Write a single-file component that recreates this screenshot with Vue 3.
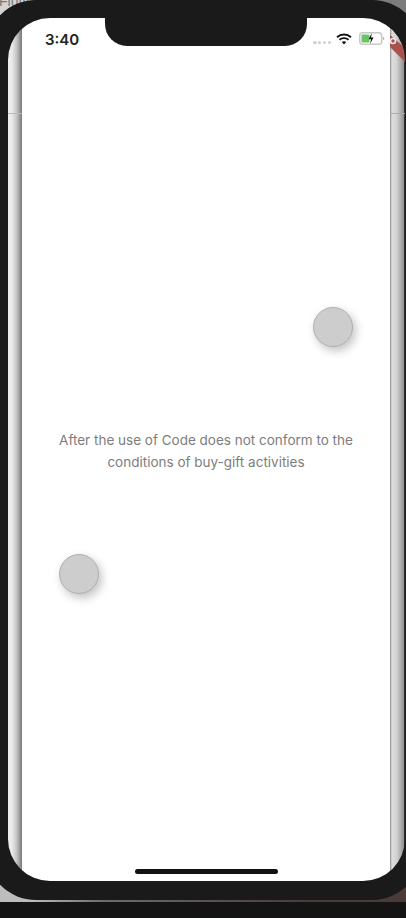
<script setup>
const message = [
  'After the use of Code does not conform to the',
  'conditions of buy-gift activities',
]
const dots = [0, 1, 2, 3]
</script>

<template>
  <div class="page">
    <div class="stage">
      <span class="behind-title">Flutter</span>
      <div class="bezel">
        <div class="display">
          <div class="strip strip-left">
            <div class="strip-top"></div>
          </div>
          <div class="screen">
            <div class="notch"></div>
            <header class="status">
              <span class="time">3:40</span>
              <div class="indicators">
                <div class="signal">
                  <i v-for="d in dots" :key="d"></i>
                </div>
                <svg class="wifi" viewBox="0 0 16 12" width="16" height="12">
                  <path d="M1 4.2C5 .6 11 .6 15 4.2" fill="none" stroke="#111" stroke-width="1.9" />
                  <path d="M3.5 6.8C6 4.6 10 4.6 12.5 6.8" fill="none" stroke="#111" stroke-width="1.9" />
                  <path d="M5.8 9.1C7 8 9 8 10.2 9.1L8 11.5Z" fill="#111" />
                </svg>
                <svg class="battery" viewBox="0 0 26 13" width="26" height="13">
                  <rect x=".75" y=".75" width="22" height="11.5" rx="3" fill="#fff" stroke="#c8c8c8" stroke-width="1.5" />
                  <rect x="2.5" y="2.5" width="8" height="8" rx="1" fill="#67c665" />
                  <path d="M12.8 1 9.6 7.2h2.5L11 12l3.6-6.4h-2.5Z" fill="#111" />
                  <rect x="24" y="5" width="1.2" height="3" fill="#bbb" />
                </svg>
              </div>
            </header>
            <main class="content">
              <p v-for="line in message" :key="line" class="line">{{ line }}</p>
            </main>
            <div class="home"></div>
            <button class="fab fab-right" aria-label="Float right"></button>
            <button class="fab fab-left" aria-label="Float left"></button>
          </div>
          <div class="strip strip-right">
            <svg class="ribbon" viewBox="0 0 15 95" width="15" height="95">
              <path d="M0 17 15 30V44L0 29Z" fill="#a8524e" />
              <circle cx="3" cy="23" r="2.5" fill="none" stroke="#f2e6e5" stroke-width="1.6" />
            </svg>
          </div>
        </div>
      </div>
    </div>
  </div>
</template>

<style>
html, body { margin: 0; background: #141414; }
</style>

<style scoped>
.page {
  width: 406px;
  height: 918px;
  overflow: hidden;
  background: #141414;
}
.stage {
  position: relative;
  height: 902px;
  overflow: hidden;
  background:
    linear-gradient(90deg, #d4d4d4 0, #d4d4d4 50%, #7c7c7c 50%, #7c7c7c 100%) top / 100% 50% no-repeat,
    linear-gradient(90deg, #bdbdbd 0, #bdbdbd 8%, #6d6d6d 25%, #4a3b39 75%, #4a3b39 100%) bottom / 100% 50% no-repeat;
}
.behind-title {
  position: absolute;
  left: -1px;
  top: -7px;
  font: 14px "Liberation Sans", sans-serif;
  color: #777;
}
.bezel {
  position: relative;
  box-sizing: border-box;
  width: 436px;
  height: 900px;
  margin-left: -14px;
  padding: 18px 17px 19px 22px;
  border-radius: 50px;
  background: #1a1a1a;
}
.display {
  display: flex;
  height: 863px;
  overflow: hidden;
  border-radius: 42px;
}
.strip {
  flex: none;
  display: flex;
  flex-direction: column;
}
.strip-left {
  width: 14px;
  background: linear-gradient(90deg, #f0f0f0 0, #e8e8e8 30%, #c0c0c0 65%, #777 100%);
}
.strip-top {
  height: 95px;
  border-bottom: 1px solid #bbb;
}
.strip-right {
  width: 15px;
  box-sizing: border-box;
  border-right: 1px solid #333;
  background: linear-gradient(90deg, #8a8a8a 0, #dedede 14%, #d4d4d4 45%, #aaaaaa 80%, #8e8e8e 100%);
}
.ribbon {
  display: block;
  border-bottom: 1px solid #aaa;
}
.screen {
  position: relative;
  flex: none;
  width: 368px;
  display: flex;
  flex-direction: column;
  background: #fff;
}
.notch {
  position: absolute;
  left: 83px;
  top: 0;
  width: 202px;
  height: 28px;
  border-radius: 0 0 22px 22px;
  background: #1a1a1a;
}
.status {
  flex: none;
  height: 42px;
  display: flex;
  align-items: center;
  justify-content: space-between;
  padding: 0 5px 0 23px;
}
.time {
  font: 600 15px Inter, "Liberation Sans", sans-serif;
  color: #222;
}
.indicators {
  display: flex;
  align-items: center;
  gap: 5px;
  margin-top: -1px;
}
.signal {
  display: flex;
  gap: 1.6px;
  margin-top: 8px;
}
.signal i {
  width: 3.2px;
  height: 3.2px;
  border-radius: 50%;
  background: #d2d2d2;
}
.wifi,
.battery {
  display: block;
}
.battery {
  margin-left: 2px;
}
.content {
  flex: 1;
  display: flex;
  flex-direction: column;
  align-items: center;
  justify-content: center;
  padding-bottom: 28px;
}
.line {
  margin: 0;
  font: 13.5px/22px Inter, "Liberation Sans", sans-serif;
  color: #7d7d7d;
  white-space: nowrap;
}
.home {
  flex: none;
  align-self: center;
  width: 143px;
  height: 5px;
  margin-bottom: 7px;
  border-radius: 3px;
  background: #111;
}
.fab {
  position: absolute;
  box-sizing: border-box;
  width: 40px;
  height: 40px;
  padding: 0;
  border: 1.5px solid #b0b0b0;
  border-radius: 50%;
  background: #cdcdcd;
  box-shadow: 3px 4px 10px rgba(0, 0, 0, 0.24);
}
.fab-right {
  left: 291px;
  top: 289px;
}
.fab-left {
  left: 37px;
  top: 536px;
}
</style>
